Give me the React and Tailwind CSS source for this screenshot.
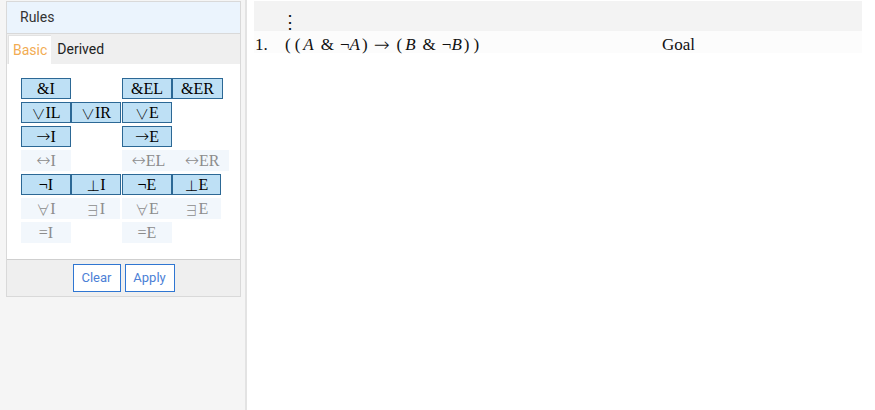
import React from 'react';

const SERIF = "font-['Liberation_Serif','DejaVu_Serif',serif]";
const ARROW = "font-['DejaVu_Sans',sans-serif] font-extralight";
const LOGIC = "font-['Noto_Sans_CJK_JP','DejaVu_Sans',sans-serif] font-light";

// each row: [left group cells, right group cells]; cell = [label, enabled, width]
const ROWS = [
  [[['&I', true, 50]], [['&EL', true, 50], ['&ER', true, 51]]],
  [[['∨IL', true, 50], ['∨IR', true, 50]], [['∨E', true, 50]]],
  [[['→I', true, 50]], [['→E', true, 50]]],
  [[['↔I', false, 50]], [['↔EL', false, 53], ['↔ER', false, 54]]],
  [[['¬I', true, 50], ['⊥I', true, 50]], [['¬E', true, 50], ['⊥E', true, 49]]],
  [[['∀I', false, 50], ['∃I', false, 49]], [['∀E', false, 50], ['∃E', false, 49]]],
  [[['=I', false, 50]], [['=E', false, 50]]],
];

function Label({ text }) {
  const head = text[0];
  if ('→↔'.includes(head)) {
    return <><span className={`${ARROW} text-[17px] leading-none`}>{head}</span>{text.slice(1)}</>;
  }
  if ('∨⊥∀∃'.includes(head)) {
    return <><span className={`${LOGIC} text-[14px]`}>{head}</span>{text.slice(1)}</>;
  }
  return <>{text}</>;
}

function RuleButton({ label, enabled, width }) {
  return (
    <div
      style={{ width }}
      className={`h-[21px] flex items-center justify-center text-[16px] leading-none ${SERIF} ${
        enabled
          ? 'bg-[#bee0f5] border border-[#2c6895] text-black'
          : 'bg-[#f2f7fc] text-[#8c8c8c]'
      }`}
    >
      <Label text={label} />
    </div>
  );
}

export default function App() {
  return (
    <div className="flex w-full h-[410px] bg-white font-['Roboto','Liberation_Sans',sans-serif]">
      {/* Sidebar */}
      <div className="w-[247px] shrink-0 h-full bg-[#f5f5f5] border-r-2 border-[#e3e3e3] pt-px pl-[6px]">
        <div className="w-[235px] border border-[#d9d9d9] bg-white">
          <div className="h-[32px] bg-[#ebf4fd] border-b border-[#d9d9d9] flex items-center px-[13px] text-[14px] text-[#333]">
            Rules
          </div>
          <div className="h-[30px] bg-[#efefef] flex items-end pl-px text-[14px]">
            <div className="h-[29px] bg-white border-l border-t border-[#e2e2e2] px-[4px] flex items-center text-[#f2ac52]">
              Basic
            </div>
            <div className="h-[29px] pl-[6px] flex items-center text-[#222]">Derived</div>
          </div>
          <div className="h-[195px] pt-[14px] pl-[14px] flex flex-col gap-[3px]">
            {ROWS.map((row, i) => (
              <div key={i} className="flex">
                <div className="w-[101px] flex">
                  {row[0].map(([l, e, w]) => <RuleButton key={l} label={l} enabled={e} width={w} />)}
                </div>
                <div className="flex">
                  {row[1].map(([l, e, w]) => <RuleButton key={l} label={l} enabled={e} width={w} />)}
                </div>
              </div>
            ))}
          </div>
          <div className="h-[37px] bg-[#efefef] border-t border-[#cfcfcf] flex items-center justify-center gap-[4px]">
            <button className="h-[28px] w-[48px] bg-white border border-[#2f76d2] text-[13px] text-[#4c7fd6]">Clear</button>
            <button className="h-[28px] w-[50px] bg-white border border-[#2f76d2] text-[13px] text-[#4c7fd6]">Apply</button>
          </div>
        </div>
      </div>

      {/* Proof area */}
      <div className={`flex-1 pt-px pl-[7px] pr-[13px] ${SERIF} text-[17px] text-[#111]`}>
        <div className="h-[30px] bg-[#f3f3f3] relative">
          <span className="absolute left-[27px] top-[12px] text-[18px] leading-none">⋮</span>
        </div>
        <div className="h-[22px] bg-[#fcfcfc] flex pt-[5px] leading-[17px]">
          <span className="w-[31px] pl-px">1.</span>
          <span className="w-[377px] whitespace-nowrap flex">
            <span>(</span>
            <span className="ml-[4px]">(</span>
            <i className="ml-[3px]">A</i>
            <span className="ml-[7px]">&amp;</span>
            <span className="ml-[6px]">¬</span>
            <i>A</i>
            <span className="ml-[2px]">)</span>
            <span className={`${ARROW} text-[19px] ml-[6px]`}>→</span>
            <span className="ml-[7px]">(</span>
            <i className="ml-[3px]">B</i>
            <span className="ml-[7px]">&amp;</span>
            <span className="ml-[6px]">¬</span>
            <i>B</i>
            <span className="ml-[2px]">)</span>
            <span className="ml-[4px]">)</span>
          </span>
          <span>Goal</span>
        </div>
      </div>
    </div>
  );
}
